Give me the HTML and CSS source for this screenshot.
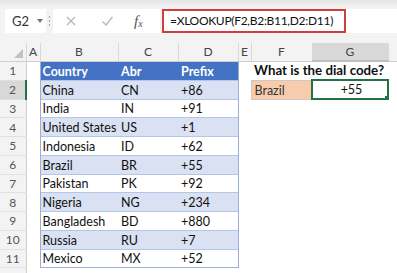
FILE: index.html
```html
<!DOCTYPE html>
<html lang="en">
<head>
    <meta charset="UTF-8">
    <title>XLOOKUP - dial code</title>
    <link rel="stylesheet" href="styles.css">
</head>
<body>
    <div class="toolbar">
        <div class="namebox">
            <span>G2</span>
            <span class="caret"></span>
        </div>
        <div class="grip"><i></i><i></i><i></i></div>
        <div class="fxbox">
            <svg class="icon" width="12" height="12" viewBox="0 0 12 12">
                <path d="M2 2 L10 10 M10 2 L2 10" stroke="#b9b9b9" stroke-width="1.4" fill="none"/>
            </svg>
            <svg class="icon" width="13" height="12" viewBox="0 0 13 12">
                <path d="M1.5 6.5 L5 10 L11.5 2" stroke="#b9b9b9" stroke-width="1.4" fill="none"/>
            </svg>
            <span class="fx">f<sub>x</sub></span>
        </div>
        <div class="formula-bar">
            <div class="formula">=XLOOKUP(F2,B2:B11,D2:D11)</div>
        </div>
    </div>

    <table class="sheet">
        <colgroup>
            <col style="width: 26px">
            <col style="width: 14px">
            <col style="width: 78px">
            <col style="width: 60px">
            <col style="width: 60px">
            <col style="width: 13px">
            <col style="width: 61px">
            <col style="width: 76px">
            <col style="width: 9px">
        </colgroup>
        <thead>
            <tr>
                <th class="corner"><span class="tri"></span></th>
                <th>A</th>
                <th>B</th>
                <th>C</th>
                <th>D</th>
                <th>E</th>
                <th>F</th>
                <th class="active-col">G</th>
                <th></th>
            </tr>
        </thead>
        <tbody>
            <tr>
                <th>1</th><td></td>
                <td class="t-head first">Country</td><td class="t-head">Abr</td><td class="t-head last">Prefix</td>
                <td></td><td class="question" colspan="2">What is the dial code?</td><td></td>
            </tr>
            <tr class="band">
                <th class="active-row">2</th><td></td>
                <td class="t first">China</td><td class="t">CN</td><td class="t last">+86</td>
                <td></td><td class="lookup">Brazil</td><td class="result">+55<span class="handle"></span></td><td></td>
            </tr>
            <tr>
                <th>3</th><td></td>
                <td class="t first">India</td><td class="t">IN</td><td class="t last">+91</td>
                <td></td><td></td><td></td><td></td>
            </tr>
            <tr class="band">
                <th>4</th><td></td>
                <td class="t first">United States</td><td class="t">US</td><td class="t last">+1</td>
                <td></td><td></td><td></td><td></td>
            </tr>
            <tr>
                <th>5</th><td></td>
                <td class="t first">Indonesia</td><td class="t">ID</td><td class="t last">+62</td>
                <td></td><td></td><td></td><td></td>
            </tr>
            <tr class="band">
                <th>6</th><td></td>
                <td class="t first">Brazil</td><td class="t">BR</td><td class="t last">+55</td>
                <td></td><td></td><td></td><td></td>
            </tr>
            <tr>
                <th>7</th><td></td>
                <td class="t first">Pakistan</td><td class="t">PK</td><td class="t last">+92</td>
                <td></td><td></td><td></td><td></td>
            </tr>
            <tr class="band">
                <th>8</th><td></td>
                <td class="t first">Nigeria</td><td class="t">NG</td><td class="t last">+234</td>
                <td></td><td></td><td></td><td></td>
            </tr>
            <tr>
                <th>9</th><td></td>
                <td class="t first">Bangladesh</td><td class="t">BD</td><td class="t last">+880</td>
                <td></td><td></td><td></td><td></td>
            </tr>
            <tr class="band">
                <th>10</th><td></td>
                <td class="t first">Russia</td><td class="t">RU</td><td class="t last">+7</td>
                <td></td><td></td><td></td><td></td>
            </tr>
            <tr class="end">
                <th>11</th><td></td>
                <td class="t first">Mexico</td><td class="t">MX</td><td class="t last">+52</td>
                <td></td><td></td><td></td><td></td>
            </tr>
            <tr>
                <th></th><td></td><td></td><td></td><td></td><td></td><td></td><td></td><td></td>
            </tr>
        </tbody>
    </table>
</body>
</html>
```

FILE: styles.css
```css
body {
    margin: 0;
    width: 397px;
    height: 273px;
    overflow: hidden;
    background-color: #fff;
    font-family: Lato, "Liberation Sans", sans-serif;
}

/* formula bar */
.toolbar {
    display: flex;
    align-items: flex-start;
    height: 43px;
    box-sizing: border-box;
    padding: 9px 0 0 5px;
    background: linear-gradient(#e4e4e4, #f3f3f3 8px);
}

.namebox {
    width: 41px;
    height: 24px;
    box-sizing: border-box;
    background-color: #fff;
    display: flex;
    align-items: center;
    padding-left: 7px;
    font-size: 13px;
    color: #333;
}

.caret {
    margin-left: 8px;
    border-left: 3px solid transparent;
    border-right: 3px solid transparent;
    border-top: 4px solid #777;
}

.grip {
    width: 7px;
    height: 24px;
    display: flex;
    flex-direction: column;
    align-items: center;
    justify-content: center;
    gap: 2px;
}

.grip i {
    width: 1px;
    height: 2px;
    background-color: #a8a8a8;
}

.fxbox {
    width: 107px;
    height: 24px;
    background-color: #fff;
    display: flex;
    align-items: center;
    padding-left: 12px;
    box-sizing: border-box;
    gap: 24px;
}

.fx {
    font-family: "Liberation Serif", serif;
    font-style: italic;
    font-size: 15px;
    color: #555;
    margin-left: -4px;
}

.fx sub {
    font-size: 10px;
    vertical-align: -1px;
}

.formula-bar {
    flex: 1;
    height: 24px;
    margin-left: 2px;
    background-color: #fff;
}

.formula {
    width: 184px;
    height: 24px;
    box-sizing: border-box;
    border: 2px solid #d13c3c;
    padding-left: 6px;
    font-size: 12px;
    letter-spacing: -0.3px;
    line-height: 20px;
    color: #111;
}

/* grid */
.sheet {
    border-collapse: collapse;
    table-layout: fixed;
    width: 397px;
    font-size: 12.5px;
}

.sheet thead th {
    height: 17px;
    padding: 0;
    background-color: #f3f3f3;
    border-right: 1px solid #d9d9d9;
    border-bottom: 1px solid #cfcfcf;
    font-weight: normal;
    font-size: 12px;
    color: #444;
}

.sheet thead th.active-col {
    background-color: #d8d8d8;
    border-bottom: 2px solid #bdbdbd;
}

.corner {
    position: relative;
}

.tri {
    position: absolute;
    right: 3px;
    bottom: 3px;
    border-left: 9px solid transparent;
    border-bottom: 9px solid #c2c2c2;
}

.sheet tbody tr {
    height: 18.75px;
}

.sheet tbody th {
    padding: 0;
    background-color: #f3f3f3;
    border-right: 1px solid #cfcfcf;
    border-bottom: 1px solid #e0e0e0;
    font-weight: normal;
    font-size: 12px;
    color: #555;
}

.sheet tbody th.active-row {
    background-color: #d8d8d8;
    border-right: 2px solid #217346;
}

.sheet td {
    padding: 0 0 0 3px;
    white-space: nowrap;
    overflow: hidden;
    color: #111;
    vertical-align: bottom;
    line-height: 17px;
}

.t-head {
    background-color: #4472c4;
    color: #fff !important;
    font-weight: bold;
}

.t {
    border-top: 1px solid #b4c6e7;
}

.band .t {
    background-color: #d9e1f2;
}

.first {
    border-left: 1px solid #9bb0d8;
    padding-left: 2px !important;
}

.last {
    border-right: 1px solid #9bb0d8;
}

.end .t {
    border-bottom: 1px solid #9bb0d8;
}

.question {
    font-weight: bold;
    font-size: 13.3px;
    overflow: visible !important;
}

.lookup {
    background-color: #f8cbad;
    border: 1px solid #c9c9c9;
    color: #333 !important;
}

.result {
    position: relative;
    text-align: center;
    border: 2px solid #217346;
}

.handle {
    position: absolute;
    right: -4px;
    bottom: -4px;
    width: 5px;
    height: 5px;
    background-color: #217346;
    border: 1px solid #fff;
}
```
